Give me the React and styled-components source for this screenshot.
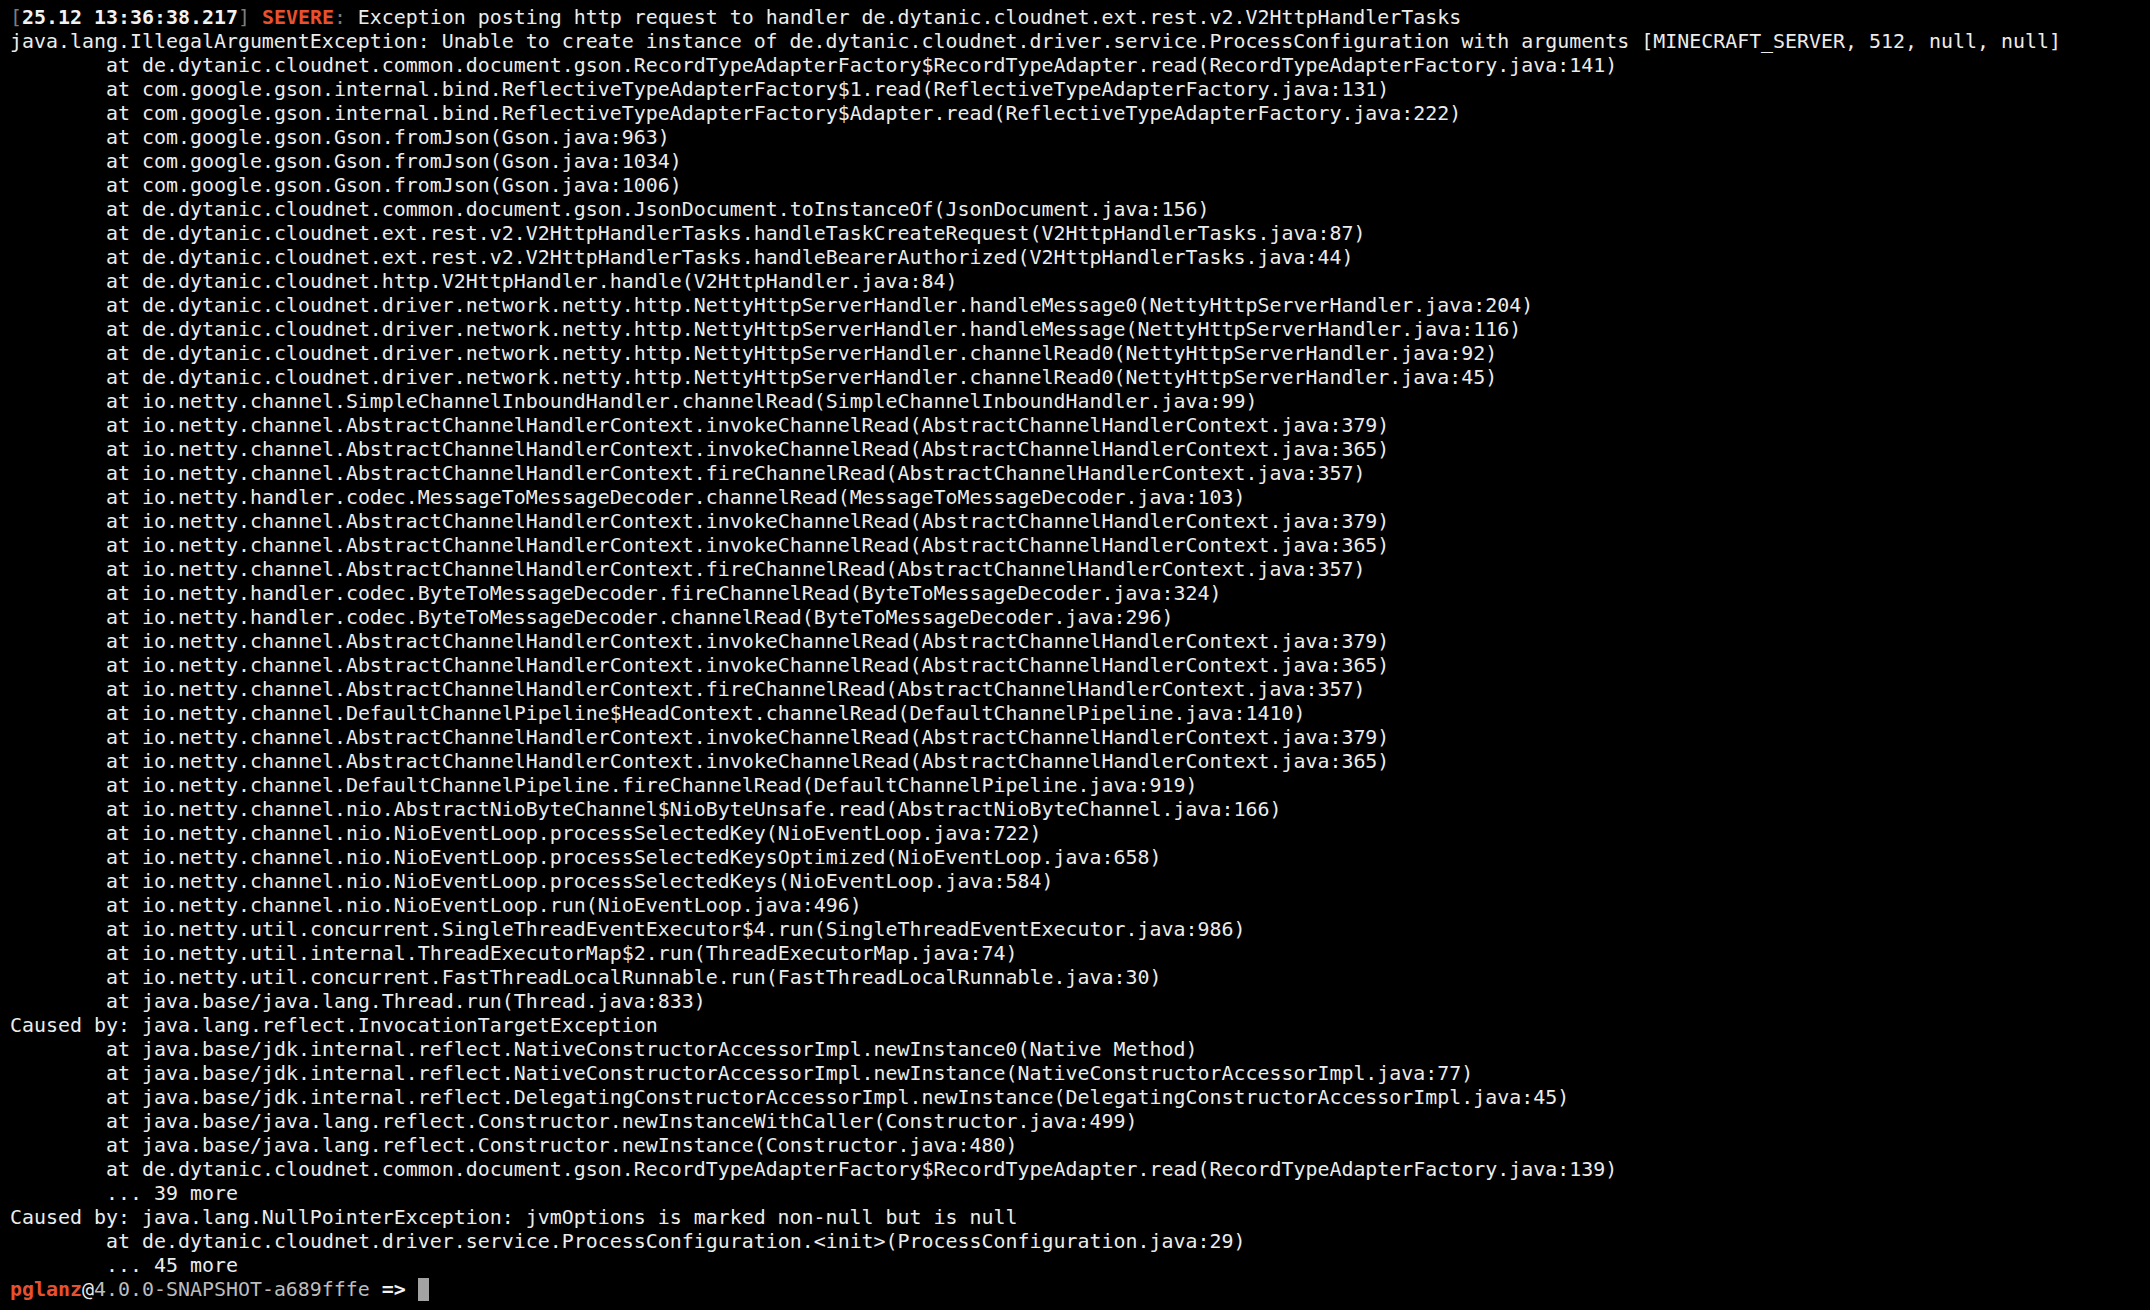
import React from 'react';
import styled, { createGlobalStyle } from 'styled-components';

const GlobalStyle = createGlobalStyle`
  html, body {
    margin: 0;
    padding: 0;
    background-color: #000000;
  }
`;

const Terminal = styled.div`
  width: 2150px;
  height: 1310px;
  box-sizing: border-box;
  padding: 6px 0 0 10px;
  overflow: hidden;
  background-color: #000000;
  color: #ececec;
  font-family: "DejaVu Sans Mono", "Liberation Mono", monospace;
  font-size: 19.93px;
  line-height: 24px;
`;

const Line = styled.div`
  height: 24px;
  white-space: pre;
  tab-size: 8;
  ${props => props.indent && `padding-left: ${props.indent * 12}px;`}
`;

const Dim = styled.span`
  color: #7d7d7d;
`;

const Stamp = styled.span`
  font-weight: bold;
  color: #f2f2f2;
`;

const Severe = styled.span`
  font-weight: bold;
  color: #e8512f;
`;

const User = styled.span`
  font-weight: bold;
  color: #e8512f;
`;

const Version = styled.span`
  color: #bdbdbd;
`;

const Arrow = styled.span`
  font-weight: bold;
  color: #f2f2f2;
`;

const Cursor = styled.span`
  display: inline-block;
  width: 11px;
  height: 23px;
  margin-left: 12px;
  vertical-align: -5px;
  background-color: #a3a3a3;
`;

const trace1 = [
    'de.dytanic.cloudnet.common.document.gson.RecordTypeAdapterFactory$RecordTypeAdapter.read(RecordTypeAdapterFactory.java:141)',
    'com.google.gson.internal.bind.ReflectiveTypeAdapterFactory$1.read(ReflectiveTypeAdapterFactory.java:131)',
    'com.google.gson.internal.bind.ReflectiveTypeAdapterFactory$Adapter.read(ReflectiveTypeAdapterFactory.java:222)',
    'com.google.gson.Gson.fromJson(Gson.java:963)',
    'com.google.gson.Gson.fromJson(Gson.java:1034)',
    'com.google.gson.Gson.fromJson(Gson.java:1006)',
    'de.dytanic.cloudnet.common.document.gson.JsonDocument.toInstanceOf(JsonDocument.java:156)',
    'de.dytanic.cloudnet.ext.rest.v2.V2HttpHandlerTasks.handleTaskCreateRequest(V2HttpHandlerTasks.java:87)',
    'de.dytanic.cloudnet.ext.rest.v2.V2HttpHandlerTasks.handleBearerAuthorized(V2HttpHandlerTasks.java:44)',
    'de.dytanic.cloudnet.http.V2HttpHandler.handle(V2HttpHandler.java:84)',
    'de.dytanic.cloudnet.driver.network.netty.http.NettyHttpServerHandler.handleMessage0(NettyHttpServerHandler.java:204)',
    'de.dytanic.cloudnet.driver.network.netty.http.NettyHttpServerHandler.handleMessage(NettyHttpServerHandler.java:116)',
    'de.dytanic.cloudnet.driver.network.netty.http.NettyHttpServerHandler.channelRead0(NettyHttpServerHandler.java:92)',
    'de.dytanic.cloudnet.driver.network.netty.http.NettyHttpServerHandler.channelRead0(NettyHttpServerHandler.java:45)',
    'io.netty.channel.SimpleChannelInboundHandler.channelRead(SimpleChannelInboundHandler.java:99)',
    'io.netty.channel.AbstractChannelHandlerContext.invokeChannelRead(AbstractChannelHandlerContext.java:379)',
    'io.netty.channel.AbstractChannelHandlerContext.invokeChannelRead(AbstractChannelHandlerContext.java:365)',
    'io.netty.channel.AbstractChannelHandlerContext.fireChannelRead(AbstractChannelHandlerContext.java:357)',
    'io.netty.handler.codec.MessageToMessageDecoder.channelRead(MessageToMessageDecoder.java:103)',
    'io.netty.channel.AbstractChannelHandlerContext.invokeChannelRead(AbstractChannelHandlerContext.java:379)',
    'io.netty.channel.AbstractChannelHandlerContext.invokeChannelRead(AbstractChannelHandlerContext.java:365)',
    'io.netty.channel.AbstractChannelHandlerContext.fireChannelRead(AbstractChannelHandlerContext.java:357)',
    'io.netty.handler.codec.ByteToMessageDecoder.fireChannelRead(ByteToMessageDecoder.java:324)',
    'io.netty.handler.codec.ByteToMessageDecoder.channelRead(ByteToMessageDecoder.java:296)',
    'io.netty.channel.AbstractChannelHandlerContext.invokeChannelRead(AbstractChannelHandlerContext.java:379)',
    'io.netty.channel.AbstractChannelHandlerContext.invokeChannelRead(AbstractChannelHandlerContext.java:365)',
    'io.netty.channel.AbstractChannelHandlerContext.fireChannelRead(AbstractChannelHandlerContext.java:357)',
    'io.netty.channel.DefaultChannelPipeline$HeadContext.channelRead(DefaultChannelPipeline.java:1410)',
    'io.netty.channel.AbstractChannelHandlerContext.invokeChannelRead(AbstractChannelHandlerContext.java:379)',
    'io.netty.channel.AbstractChannelHandlerContext.invokeChannelRead(AbstractChannelHandlerContext.java:365)',
    'io.netty.channel.DefaultChannelPipeline.fireChannelRead(DefaultChannelPipeline.java:919)',
    'io.netty.channel.nio.AbstractNioByteChannel$NioByteUnsafe.read(AbstractNioByteChannel.java:166)',
    'io.netty.channel.nio.NioEventLoop.processSelectedKey(NioEventLoop.java:722)',
    'io.netty.channel.nio.NioEventLoop.processSelectedKeysOptimized(NioEventLoop.java:658)',
    'io.netty.channel.nio.NioEventLoop.processSelectedKeys(NioEventLoop.java:584)',
    'io.netty.channel.nio.NioEventLoop.run(NioEventLoop.java:496)',
    'io.netty.util.concurrent.SingleThreadEventExecutor$4.run(SingleThreadEventExecutor.java:986)',
    'io.netty.util.internal.ThreadExecutorMap$2.run(ThreadExecutorMap.java:74)',
    'io.netty.util.concurrent.FastThreadLocalRunnable.run(FastThreadLocalRunnable.java:30)',
    'java.base/java.lang.Thread.run(Thread.java:833)',
];

const trace2 = [
    'java.base/jdk.internal.reflect.NativeConstructorAccessorImpl.newInstance0(Native Method)',
    'java.base/jdk.internal.reflect.NativeConstructorAccessorImpl.newInstance(NativeConstructorAccessorImpl.java:77)',
    'java.base/jdk.internal.reflect.DelegatingConstructorAccessorImpl.newInstance(DelegatingConstructorAccessorImpl.java:45)',
    'java.base/java.lang.reflect.Constructor.newInstanceWithCaller(Constructor.java:499)',
    'java.base/java.lang.reflect.Constructor.newInstance(Constructor.java:480)',
    'de.dytanic.cloudnet.common.document.gson.RecordTypeAdapterFactory$RecordTypeAdapter.read(RecordTypeAdapterFactory.java:139)',
];

const Frames = ({items}) => items.map((frame, i) => (
    <Line key={i} indent={8}>at {frame}</Line>
));

const App = () => {
    return (
        <>
            <GlobalStyle/>
            <Terminal>
                <Line>
                    <Dim>[</Dim><Stamp>25.12 13:36:38.217</Stamp><Dim>]</Dim> <Severe>SEVERE</Severe><Dim>:</Dim> Exception posting http request to handler de.dytanic.cloudnet.ext.rest.v2.V2HttpHandlerTasks
                </Line>
                <Line>java.lang.IllegalArgumentException: Unable to create instance of de.dytanic.cloudnet.driver.service.ProcessConfiguration with arguments [MINECRAFT_SERVER, 512, null, null]</Line>
                <Frames items={trace1}/>
                <Line>Caused by: java.lang.reflect.InvocationTargetException</Line>
                <Frames items={trace2}/>
                <Line indent={8}>... 39 more</Line>
                <Line>Caused by: java.lang.NullPointerException: jvmOptions is marked non-null but is null</Line>
                <Frames items={['de.dytanic.cloudnet.driver.service.ProcessConfiguration.<init>(ProcessConfiguration.java:29)']}/>
                <Line indent={8}>... 45 more</Line>
                <Line>
                    <User>pglanz</User>@<Version>4.0.0-SNAPSHOT-a689fffe</Version> <Arrow>=&gt;</Arrow><Cursor/>
                </Line>
            </Terminal>
        </>
    );
};

export default App;
